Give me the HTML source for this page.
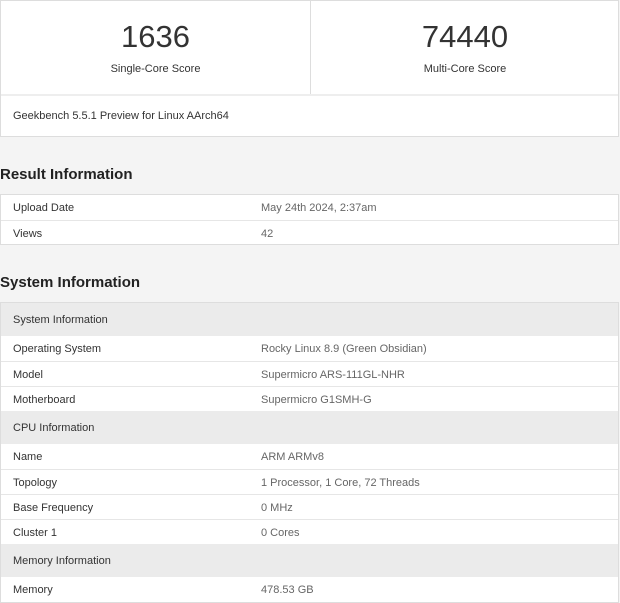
<!DOCTYPE html>
<html><head><style>
body{margin:0;background:#f4f4f4;font-family:"Liberation Sans",sans-serif;width:620px;height:603px;overflow:hidden;color:#333}
.card{position:absolute;left:0;width:619px;background:#fff;border:1px solid #ddd;box-sizing:border-box}
.score{position:absolute;top:0;height:94px;width:310px;text-align:center}
.score .n{position:absolute;top:18px;width:100%;font-size:31px;color:#333}
.score .l{position:absolute;top:62px;width:100%;font-size:11px;color:#333}
h2{position:absolute;left:0;margin:0;font-size:15px;font-weight:bold;color:#222}
.row{position:relative;height:25px;border-top:1px solid #e6e6e6;box-sizing:border-box;font-size:11px;line-height:26px}
.row:first-child{border-top:none}
.row .k{position:absolute;left:12px}
.row .v{position:absolute;left:260px;color:#666}
.hd{height:33px;background:#ebebeb;font-size:11px;line-height:34px;padding-left:12px;box-sizing:border-box}
</style></head><body>
<div class="card" style="top:0;height:137px">
 <div class="score" style="left:0;border-right:1px solid #ddd;box-sizing:border-box"><div class="n">1636</div><div class="l">Single-Core Score</div></div>
 <div class="score" style="left:309px"><div class="n">74440</div><div class="l">Multi-Core Score</div></div>
 <div style="position:absolute;top:93px;left:0;right:0;border-top:2px solid #eee;height:42px;font-size:11px;line-height:41px;padding-left:12px">Geekbench 5.5.1 Preview for Linux AArch64</div>
</div>
<h2 style="top:166px">Result Information</h2>
<div class="card" style="top:194px;height:51px">
 <div class="row"><span class="k">Upload Date</span><span class="v">May 24th 2024, 2:37am</span></div>
 <div class="row"><span class="k">Views</span><span class="v">42</span></div>
</div>
<h2 style="top:274px">System Information</h2>
<div class="card" style="top:302px;height:301px">
 <div class="hd">System Information</div>
 <div class="row" style="border-top:none"><span class="k">Operating System</span><span class="v">Rocky Linux 8.9 (Green Obsidian)</span></div>
 <div class="row"><span class="k">Model</span><span class="v">Supermicro ARS-111GL-NHR</span></div>
 <div class="row"><span class="k">Motherboard</span><span class="v">Supermicro G1SMH-G</span></div>
 <div class="hd">CPU Information</div>
 <div class="row" style="border-top:none"><span class="k">Name</span><span class="v">ARM ARMv8</span></div>
 <div class="row"><span class="k">Topology</span><span class="v">1 Processor, 1 Core, 72 Threads</span></div>
 <div class="row"><span class="k">Base Frequency</span><span class="v">0 MHz</span></div>
 <div class="row"><span class="k">Cluster 1</span><span class="v">0 Cores</span></div>
 <div class="hd">Memory Information</div>
 <div class="row" style="border-top:none"><span class="k">Memory</span><span class="v">478.53 GB</span></div>
</div>
</body></html>
